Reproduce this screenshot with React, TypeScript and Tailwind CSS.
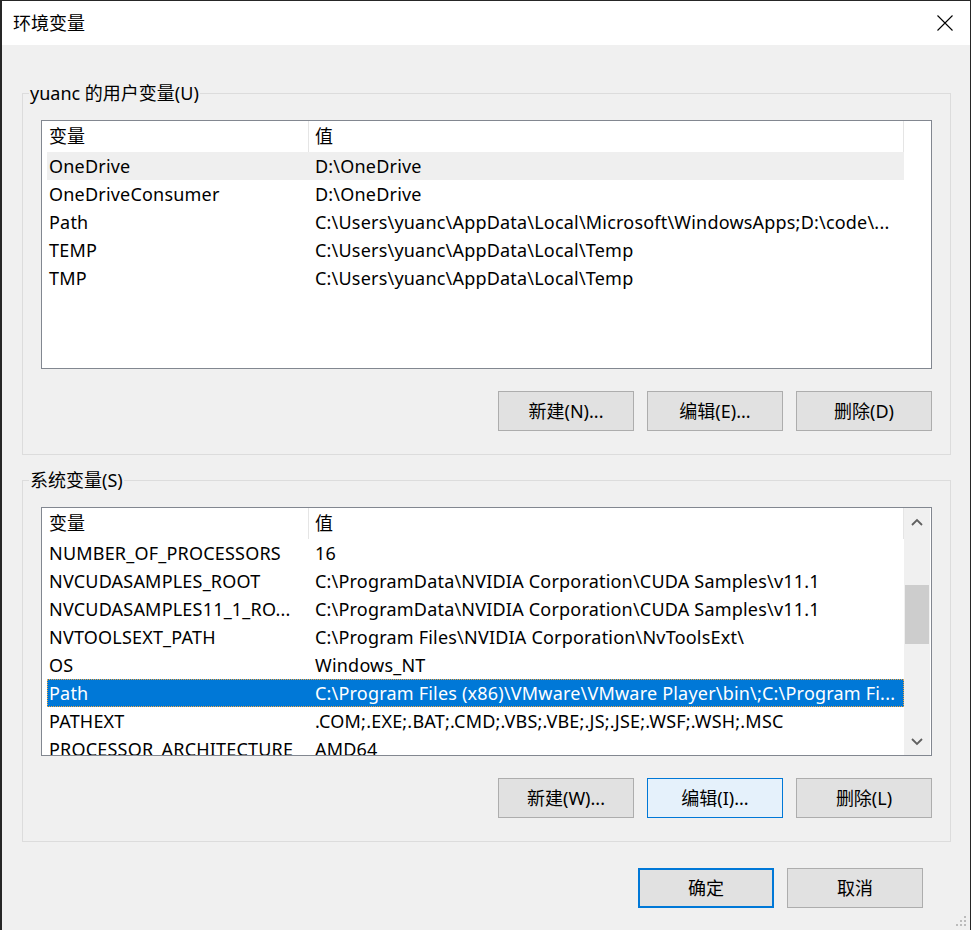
import React from 'react';

type Row = [string, string];

const userVars: Row[] = [
  ['OneDrive', 'D:\\OneDrive'],
  ['OneDriveConsumer', 'D:\\OneDrive'],
  ['Path', 'C:\\Users\\yuanc\\AppData\\Local\\Microsoft\\WindowsApps;D:\\code\\...'],
  ['TEMP', 'C:\\Users\\yuanc\\AppData\\Local\\Temp'],
  ['TMP', 'C:\\Users\\yuanc\\AppData\\Local\\Temp'],
];

const sysVars: Row[] = [
  ['NUMBER_OF_PROCESSORS', '16'],
  ['NVCUDASAMPLES_ROOT', 'C:\\ProgramData\\NVIDIA Corporation\\CUDA Samples\\v11.1'],
  ['NVCUDASAMPLES11_1_RO...', 'C:\\ProgramData\\NVIDIA Corporation\\CUDA Samples\\v11.1'],
  ['NVTOOLSEXT_PATH', 'C:\\Program Files\\NVIDIA Corporation\\NvToolsExt\\'],
  ['OS', 'Windows_NT'],
  ['Path', 'C:\\Program Files (x86)\\VMware\\VMware Player\\bin\\;C:\\Program Fi...'],
  ['PATHEXT', '.COM;.EXE;.BAT;.CMD;.VBS;.VBE;.JS;.JSE;.WSF;.WSH;.MSC'],
  ['PROCESSOR_ARCHITECTURE', 'AMD64'],
];

const Chevron: React.FC<{ down?: boolean }> = ({ down }) => (
  <svg width="12" height="8" viewBox="0 0 12 8" className={down ? 'rotate-180' : ''}>
    <polyline points="1,7 6,2 11,7" fill="none" stroke="#606060" strokeWidth="1.8" />
  </svg>
);

const Scrollbar: React.FC = () => (
  <div className="w-[26px] bg-[#f0f0f0] flex flex-col px-[1px]">
    <div className="h-[27px] flex items-center justify-center">
      <Chevron />
    </div>
    <div className="h-[50px]" />
    <div className="h-[59px] bg-[#cdcdcd]" />
    <div className="flex-1" />
    <div className="h-[27px] flex items-center justify-center">
      <Chevron down />
    </div>
  </div>
);

const VarList: React.FC<{ rows: Row[]; hover?: number; selected?: number; scroll?: boolean }> = ({
  rows,
  hover,
  selected,
  scroll,
}) => (
  <div className="h-[249px] border border-[#828790] bg-white flex overflow-hidden">
    <div className="w-[862px] flex flex-col">
      <div className="h-[31px] flex shrink-0 text-[18px]">
        <div className="w-[267px] border-r border-[#e5e5e5] pl-[7px] flex items-center">变量</div>
        <div className="w-[595px] border-r border-[#e5e5e5] pl-[6px] flex items-center">值</div>
      </div>
      {rows.map(([name, value], i) => (
        <div
          key={name + i}
          className={
            'ml-[5px] h-[28px] shrink-0 flex items-center text-[18px] tracking-[0.2px] ' +
            (i === selected
              ? 'bg-[#0078d7] text-white outline-1 outline-dotted outline-[#f5a742] -outline-offset-1'
              : i === hover
              ? 'bg-[#efefef]'
              : '')
          }
        >
          <div className="w-[261px] pl-[2px] whitespace-nowrap overflow-hidden">{name}</div>
          <div className="w-[596px] pl-[7px] whitespace-nowrap overflow-hidden">{value}</div>
        </div>
      ))}
    </div>
    {scroll && <Scrollbar />}
  </div>
);

const Btn: React.FC<{ label: string; hot?: boolean; def?: boolean }> = ({ label, hot, def }) => (
  <button
    className={
      'w-[136px] h-[40px] text-[18px] text-black flex items-center justify-center ' +
      (def
        ? 'border-2 border-[#0078d7] bg-[#e1e1e1]'
        : hot
        ? 'border border-[#0078d7] bg-[#e5f1fb]'
        : 'border border-[#adadad] bg-[#e1e1e1]')
    }
  >
    {label}
  </button>
);

const Group: React.FC<{ title: string; children: React.ReactNode }> = ({ title, children }) => (
  <fieldset className="border border-[#dcdcdc] px-[18px] pt-[14px] pb-[23px]">
    <legend className="-ml-[12px] px-[1px] leading-[25px] text-[18px]">{title}</legend>
    {children}
  </fieldset>
);

export default function App() {
  return (
    <div className="w-[971px] h-[930px] relative flex flex-col bg-[#f0f0f0] border-l-2 border-t border-r border-[#262626] text-black font-[family-name:'Noto_Sans','Noto_Sans_CJK_SC',sans-serif] overflow-hidden">
      <div className="h-[44px] shrink-0 bg-white flex items-center justify-between pl-[11px] pr-[17px]">
        <span className="text-[18px]">环境变量</span>
        <svg width="16" height="16" viewBox="0 0 16 16">
          <path d="M0.5 0.5 L15.5 15.5 M15.5 0.5 L0.5 15.5" stroke="#000" strokeWidth="1.1" />
        </svg>
      </div>
      <div className="flex flex-col pl-[20px] pr-[19px] pt-[36px]">
        <Group title="yuanc 的用户变量(U)">
          <VarList rows={userVars} hover={0} />
          <div className="mt-[22px] flex justify-end gap-[13px]">
            <Btn label="新建(N)..." />
            <Btn label="编辑(E)..." />
            <Btn label="删除(D)" />
          </div>
        </Group>
        <div className="mt-[13px]">
          <Group title="系统变量(S)">
            <VarList rows={sysVars} selected={5} scroll />
            <div className="mt-[22px] flex justify-end gap-[13px]">
              <Btn label="新建(W)..." />
              <Btn label="编辑(I)..." hot />
              <Btn label="删除(L)" />
            </div>
          </Group>
        </div>
        <div className="mt-[26px] flex justify-end gap-[13px] pr-[28px]">
          <Btn label="确定" def />
          <Btn label="取消" />
        </div>
      </div>
      <svg width="12" height="12" viewBox="0 0 12 12" className="absolute right-[2px] bottom-[2px]">
        <g fill="#bcbcbc">
          <rect x="8" y="0" width="2" height="2" />
          <rect x="4" y="4" width="2" height="2" />
          <rect x="8" y="4" width="2" height="2" />
          <rect x="0" y="8" width="2" height="2" />
          <rect x="4" y="8" width="2" height="2" />
          <rect x="8" y="8" width="2" height="2" />
        </g>
      </svg>
    </div>
  );
}
